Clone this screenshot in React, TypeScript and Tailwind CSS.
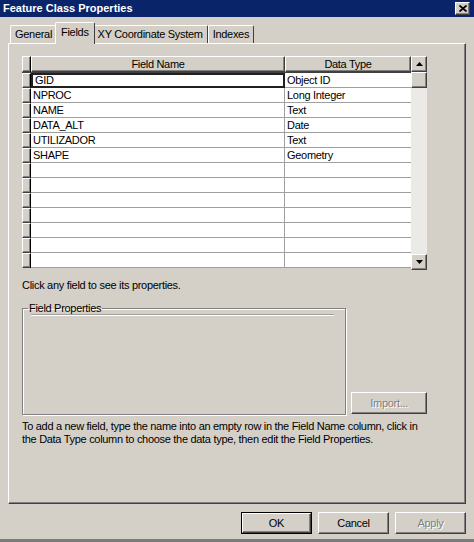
import React from 'react';

const raised =
  'border border-t-white border-l-white border-r-[#404040] border-b-[#404040] shadow-[inset_-1px_-1px_0_#808080]';

const rows = [
  { name: 'GID', type: 'Object ID' },
  { name: 'NPROC', type: 'Long Integer' },
  { name: 'NAME', type: 'Text' },
  { name: 'DATA_ALT', type: 'Date' },
  { name: 'UTILIZADOR', type: 'Text' },
  { name: 'SHAPE', type: 'Geometry' },
  ...Array.from({ length: 7 }, () => ({ name: '', type: '' })),
];

const Arrow: React.FC<{ up?: boolean }> = ({ up }) => (
  <svg width="7" height="4" viewBox="0 0 7 4">
    {up ? <polygon points="3.5,0 7,4 0,4" fill="#000" /> : <polygon points="0,0 7,0 3.5,4" fill="#000" />}
  </svg>
);

const Button: React.FC<{ label: string; disabled?: boolean; isDefault?: boolean; className?: string }> = ({
  label,
  disabled,
  isDefault,
  className = '',
}) => (
  <div className={`${isDefault ? 'border border-black' : ''} ${className}`}>
    <div
      className={`h-full flex items-center justify-center bg-[#d4d0c8] ${raised} ${
        disabled ? 'text-[#808080] [text-shadow:1px_1px_0_#fff]' : 'text-black'
      }`}
    >
      {label}
    </div>
  </div>
);

const Tab: React.FC<{ label: string; active?: boolean }> = ({ label, active }) => (
  <div
    className={`flex items-center px-[4px] bg-[#d4d0c8] border-t border-l border-t-white border-l-white border-r border-r-[#404040] rounded-t-[2px] ${
      active ? 'h-[22px] -mx-[2px] px-[5px] relative z-10 mb-[-1px] pb-[3px]' : 'h-[18px]'
    }`}
  >
    {label}
  </div>
);

export default function App() {
  return (
    <div className="w-[474px] h-[542px] bg-[#d4d0c8] flex flex-col overflow-hidden text-[11px] tracking-[-0.3px] text-black font-['Liberation_Sans',Arial,sans-serif] leading-[13px] border-b-[3px] border-b-[#7b7b7b]">
      {/* title bar */}
      <div className="h-[17px] bg-[#0a246a] flex items-center justify-between pl-[3px] pr-[4px] shrink-0">
        <span className="text-white font-bold text-[11px] tracking-normal">Feature Class Properties</span>
        <div className={`w-[15px] h-[13px] bg-[#d4d0c8] flex items-center justify-center ${raised}`}>
          <svg width="8" height="7" viewBox="0 0 8 7">
            <path d="M0.5 0.5 L7.5 6.5 M7.5 0.5 L0.5 6.5" stroke="#000" strokeWidth="1.8" />
          </svg>
        </div>
      </div>

      <div className="px-[8px] pt-[5px] flex flex-col">
        {/* tabs */}
        <div className="flex items-end h-[21px] pl-[2px]">
          <Tab label="General" />
          <Tab label="Fields" active />
          <Tab label="XY Coordinate System" />
          <Tab label="Indexes" />
        </div>

        {/* panel */}
        <div className="h-[461px] border border-t-white border-l-white border-r-[#404040] border-b-[#404040] shadow-[inset_-1px_-1px_0_#808080] pl-[13px] pr-[38px] pt-[12px] flex flex-col">
          {/* grid */}
          <div className="flex h-[214px]">
            <div className="w-[389px] flex flex-col">
              <div className="flex h-[17px] border-b border-b-[#404040]">
                <div className={`w-[9px] bg-[#d4d0c8] ${raised} border-r-black`} />
                <div className={`w-[254px] bg-[#d4d0c8] flex items-center justify-center ${raised}`}>Field Name</div>
                <div className={`flex-1 bg-[#d4d0c8] flex items-center justify-center ${raised}`}>Data Type</div>
              </div>
              {rows.map((r, i) => (
                <div key={i} className="flex h-[15px]">
                  <div className={`w-[9px] bg-[#d4d0c8] ${raised} border-r-black`} />
                  <div
                    className={`w-[254px] bg-white flex items-center pl-[2px] ${
                      i === 0 ? 'border-2 border-[#202020] pl-[1px]' : 'border-b border-r border-[#a0a0a0]'
                    }`}
                  >
                    {r.name}
                  </div>
                  <div className="flex-1 bg-white flex items-center pl-[2px] border-b border-[#a0a0a0]">{r.type}</div>
                </div>
              ))}
            </div>
            {/* scrollbar */}
            <div className="w-[16px] flex flex-col bg-[#eceae6]">
              <div className={`h-[16px] bg-[#d4d0c8] flex items-center justify-center ${raised}`}>
                <Arrow up />
              </div>
              <div className={`h-[16px] bg-[#d4d0c8] ${raised}`} />
              <div className="flex-1" />
              <div className={`h-[16px] bg-[#d4d0c8] flex items-center justify-center ${raised}`}>
                <Arrow />
              </div>
            </div>
          </div>

          <p className="mt-[9px]">Click any field to see its properties.</p>

          <div className="flex items-end mt-[10px] gap-[5px]">
            <fieldset className="w-[325px] h-[113px] border border-[#808080] shadow-[inset_1px_1px_0_#fff,1px_1px_0_#fff] px-[8px]">
              <legend className="px-[1px] ml-[-3px]">Field Properties</legend>
              <div className="mt-[-1px] mr-[3px] h-[2px] border-t border-t-[#a0a0a0] border-b border-b-white" />
            </fieldset>
            <Button label="Import..." disabled className="w-[76px] h-[22px] mb-[1px]" />
          </div>

          <p className="mt-[5px]">
            To add a new field, type the name into an empty row in the Field Name column, click in the Data Type
            column to choose the data type, then edit the Field Properties.
          </p>
        </div>

        {/* buttons */}
        <div className="flex justify-end gap-[6px] mt-[8px]">
          <Button label="OK" isDefault className="w-[71px] h-[22px]" />
          <Button label="Cancel" className="w-[71px] h-[22px]" />
          <Button label="Apply" disabled className="w-[71px] h-[22px]" />
        </div>
      </div>
    </div>
  );
}
